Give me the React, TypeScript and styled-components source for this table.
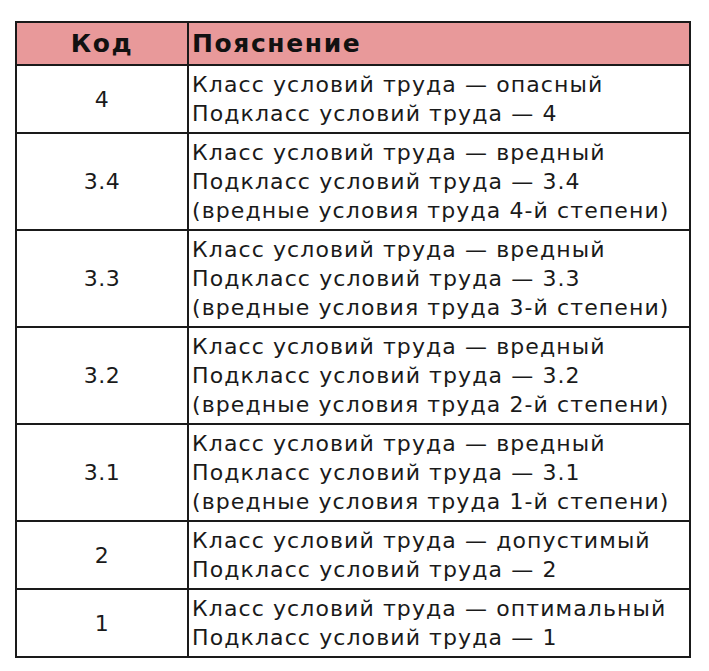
import React, {FC} from 'react';
import styled, {createGlobalStyle} from 'styled-components';

const GlobalStyle = createGlobalStyle`
    html, body {
        margin: 0;
        padding: 0;
        background: #ffffff;
    }
`;

type Row = {code: string; lines: string[]};

const rows: Row[] = [
    {code: '4', lines: ['Класс условий труда — опасный', 'Подкласс условий труда — 4']},
    {code: '3.4', lines: ['Класс условий труда — вредный', 'Подкласс условий труда — 3.4', '(вредные условия труда 4-й степени)']},
    {code: '3.3', lines: ['Класс условий труда — вредный', 'Подкласс условий труда — 3.3', '(вредные условия труда 3-й степени)']},
    {code: '3.2', lines: ['Класс условий труда — вредный', 'Подкласс условий труда — 3.2', '(вредные условия труда 2-й степени)']},
    {code: '3.1', lines: ['Класс условий труда — вредный', 'Подкласс условий труда — 3.1', '(вредные условия труда 1-й степени)']},
    {code: '2', lines: ['Класс условий труда — допустимый', 'Подкласс условий труда — 2']},
    {code: '1', lines: ['Класс условий труда — оптимальный', 'Подкласс условий труда — 1']},
];

const App: FC = () => {
    return <Page>
        <GlobalStyle/>
        <Table>
            <colgroup>
                <col style={{width: 172}}/>
                <col/>
            </colgroup>
            <thead>
            <tr>
                <HeadCell align="center">Код</HeadCell>
                <HeadCell align="left">Пояснение</HeadCell>
            </tr>
            </thead>
            <tbody>
            {rows.map(r => (
                <tr key={r.code}>
                    <CodeCell>{r.code}</CodeCell>
                    <TextCell>
                        {r.lines.map((l, i) => <Line key={i}>{l}</Line>)}
                    </TextCell>
                </tr>
            ))}
            </tbody>
        </Table>
    </Page>
}

export default App;

const Page = styled.div({
    padding: '21px 18px 14px 15px',
    fontFamily: '"DejaVu Sans", "Noto Sans", sans-serif',
    color: '#1a1a1a',
})

const Table = styled.table({
    width: 676,
    borderCollapse: 'collapse',
    tableLayout: 'fixed',
    border: '2px solid #1a1a1a',
})

const HeadCell = styled.th<{align: 'left' | 'center'}>(props => ({
    background: '#e8999a',
    border: '2px solid #1a1a1a',
    height: 41,
    padding: '0 3px',
    fontSize: 25,
    fontWeight: 700,
    letterSpacing: 1.6,
    textAlign: props.align,
    color: '#111111',
}))

const CodeCell = styled.td({
    border: '2px solid #1a1a1a',
    textAlign: 'center',
    fontSize: 22,
    letterSpacing: 0.5,
    padding: 0,
})

const TextCell = styled.td({
    border: '2px solid #1a1a1a',
    padding: '4px 3px',
    fontSize: 22,
    letterSpacing: 1.1,
    lineHeight: '29px',
})

const Line = styled.div({
    whiteSpace: 'nowrap',
})
